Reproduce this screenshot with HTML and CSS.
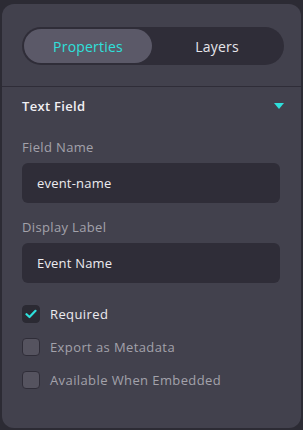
FILE: index.html
```html
<!DOCTYPE html>
<html>
<head>
<meta charset="utf-8">
<link rel="stylesheet" href="styles.css">
</head>
<body>
<div class="panel">
  <div class="tabs-wrap">
    <div class="tabs">
      <div class="tab active">Properties</div>
      <div class="tab">Layers</div>
    </div>
  </div>
  <div class="section">
    <div class="section-head">
      <span class="section-title">Text Field</span>
      <svg class="caret" width="10" height="7" viewBox="0 0 10 7"><path d="M0 0 H10 L5 6 Z" fill="#2ee0dc"/></svg>
    </div>
    <div class="field">
      <div class="label">Field Name</div>
      <div class="input">event-name</div>
    </div>
    <div class="field">
      <div class="label">Display Label</div>
      <div class="input">Event Name</div>
    </div>
    <div class="checks">
      <div class="check">
        <span class="box checked"><svg width="12" height="10" viewBox="0 0 12 10"><path d="M1.5 5.2 L4.5 8 L10.5 1.8" fill="none" stroke="#2ee0dc" stroke-width="2.2" stroke-linecap="round" stroke-linejoin="round"/></svg></span>
        <span class="check-label on">Required</span>
      </div>
      <div class="check">
        <span class="box"></span>
        <span class="check-label">Export as Metadata</span>
      </div>
      <div class="check">
        <span class="box"></span>
        <span class="check-label">Available When Embedded</span>
      </div>
    </div>
  </div>
</div>
</body>
</html>
```
FILE: styles.css
```css
* { box-sizing: border-box; }
html, body { margin: 0; padding: 0; }
body {
  width: 303px;
  height: 430px;
  background: #2c2b34;
  font-family: "Open Sans", "Noto Sans", sans-serif;
  overflow: hidden;
}
.panel {
  margin: 4px 2px 0 2px;
  height: 424px;
  background: #42414d;
  border-radius: 12px;
}
.tabs-wrap {
  padding: 23px 0 0 20px;
  height: 83px;
  border-bottom: 1px solid #2f2d38;
}
.tabs {
  width: 262px;
  height: 38px;
  background: #2f2d38;
  border-radius: 19px;
  padding: 2px;
  display: flex;
}
.tab {
  flex: 1;
  height: 34px;
  border-radius: 17px;
  display: flex;
  align-items: center;
  justify-content: center;
  font-size: 14px;
  color: #e6e5ea;
  letter-spacing: 0.2px;
}
.tab.active {
  background: #5b5968;
  color: #2ee0dc;
  flex: 0 0 128px;
}
.section {
  padding: 0 0 0 20px;
}
.section-head {
  display: flex;
  align-items: center;
  justify-content: space-between;
  width: 262px;
  height: 38px;
}
.section-title {
  font-size: 13px;
  font-weight: 600;
  color: #f0eff3;
  letter-spacing: 0.3px;
}
.caret { margin-top: 0; }
.field {
  margin-top: 14px;
}
.field + .field { margin-top: 16px; }
.label {
  font-size: 13px;
  color: #a3a2ab;
  height: 16px;
  line-height: 16px;
  letter-spacing: 0.35px;
}
.input {
  margin-top: 8px;
  width: 258px;
  height: 40px;
  background: #2f2d38;
  border-radius: 6px;
  padding-left: 15px;
  display: flex;
  align-items: center;
  font-size: 13px;
  color: #ecebef;
  letter-spacing: 0.2px;
}
.checks {
  margin-top: 22px;
  display: flex;
  flex-direction: column;
  gap: 15px;
}
.check {
  display: flex;
  align-items: center;
  height: 18px;
}
.box {
  width: 18px;
  height: 18px;
  border-radius: 4px;
  background: #55535f;
  border: 1px solid #2f2d38;
  display: flex;
  align-items: center;
  justify-content: center;
}
.box.checked {
  background: #2b2a33;
  border-color: #2b2a33;
}
.check-label {
  margin-left: 10px;
  font-size: 13px;
  color: #a3a2ab;
  letter-spacing: 0.4px;
}
.check-label.on { color: #ecebef; }
```
